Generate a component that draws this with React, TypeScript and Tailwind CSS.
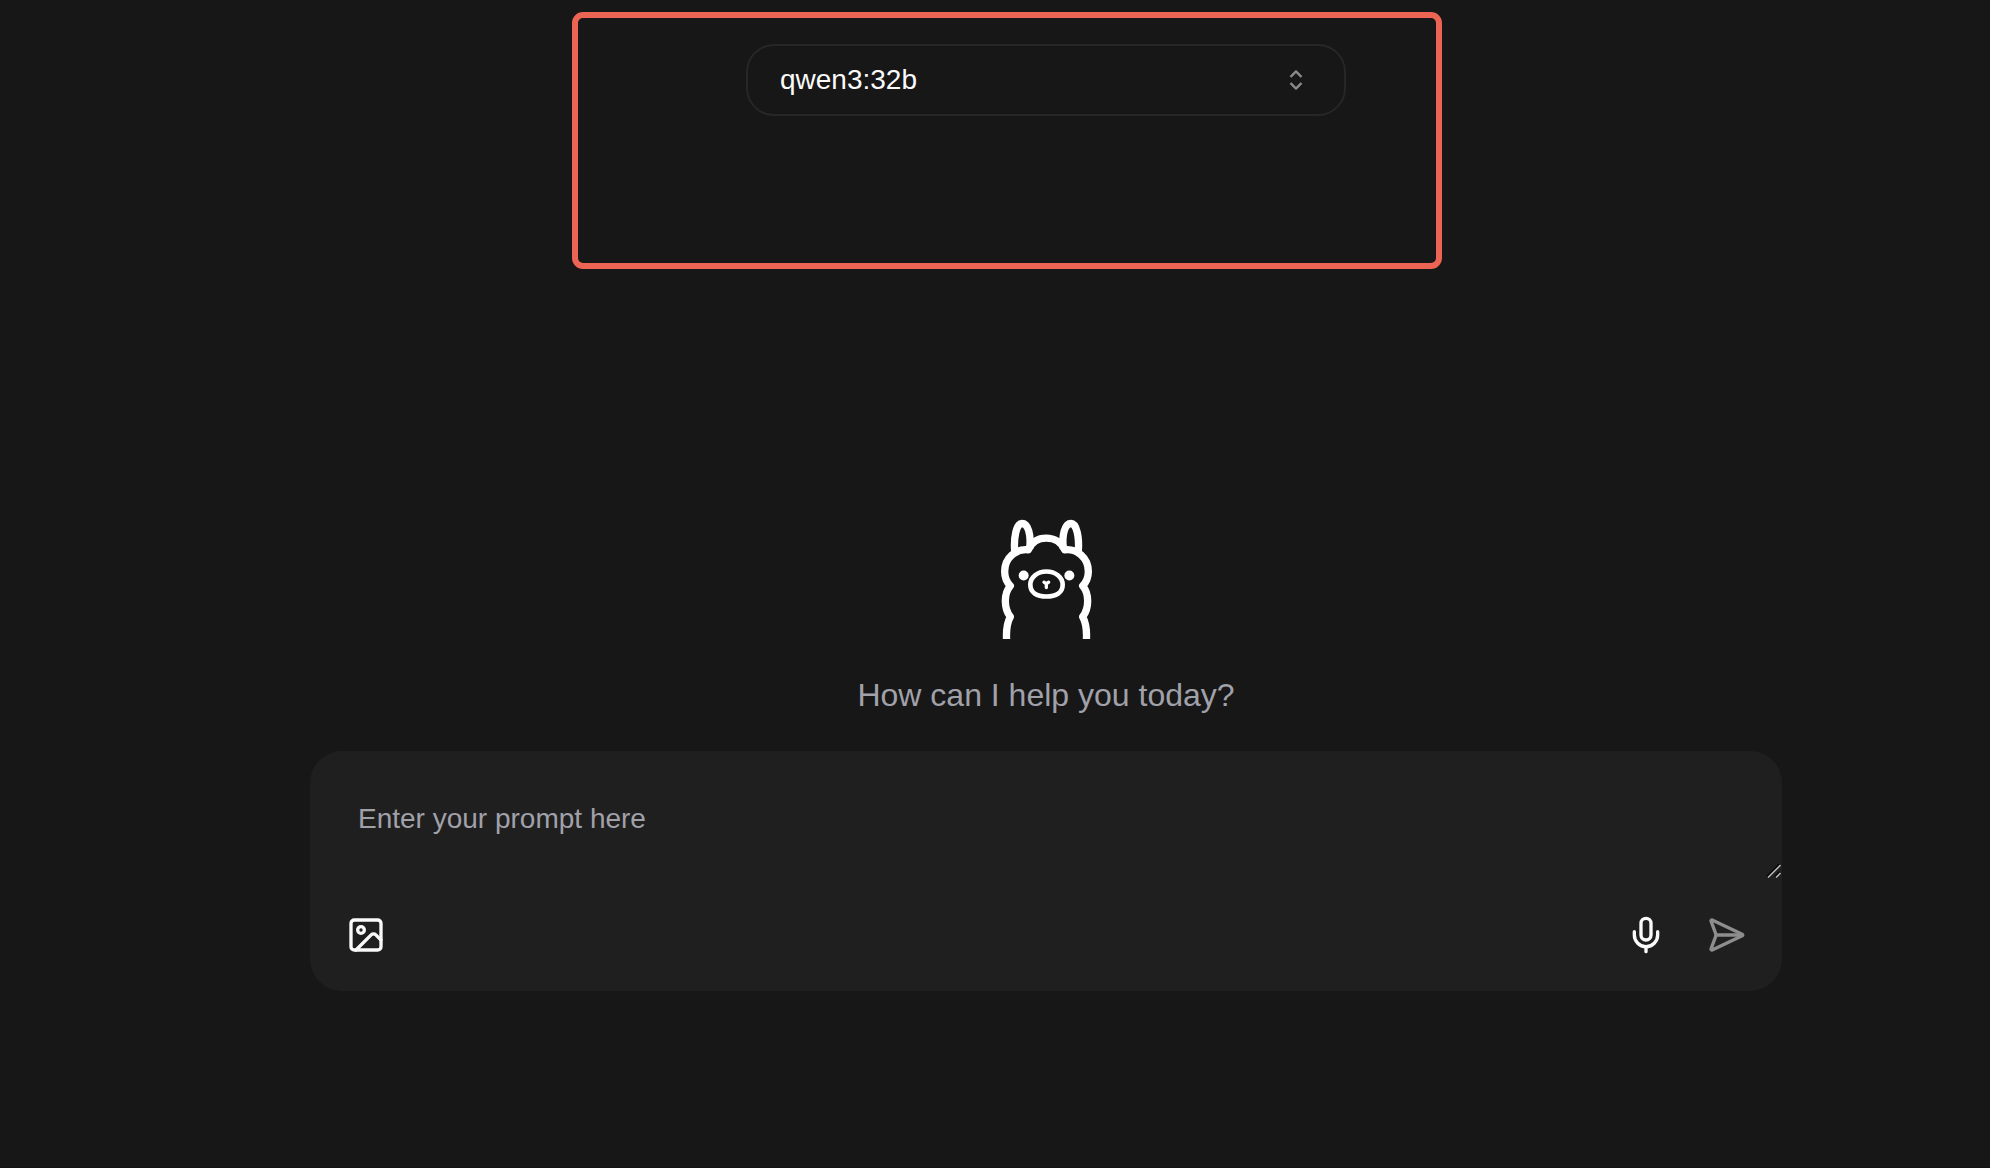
import { useState } from 'react';
import { Image as ImageIcon, Mic, SendHorizontal } from 'lucide-react';
import { RxCaretSort } from 'react-icons/rx';

const MODELS = ['qwen3:32b'];

function LlamaLogo() {
  return (
    <svg
      viewBox="63 58 273 359"
      className="h-[120px] w-[91px]"
      fill="none"
      stroke="currentColor"
      strokeWidth="22"
      strokeLinejoin="round"
      role="img"
      aria-label="Ollama"
    >
      {/* Ears */}
      <path d="M104 154C101 112 109 71 126 71C144 71 154 104 149 146" />
      <path d="M295 154C298 112 290 71 273 71C255 71 245 104 250 146" />
      {/* Head and body */}
      <path d="M80 424C78 395 80 371 91 351C71 325 71 281 91 258C80 247 74 232 74 215C74 174 108 146 145 150C155 127 175 115 199 115C223 115 244 127 254 150C291 146 325 174 325 215C325 232 319 247 308 258C328 281 328 325 308 351C319 371 321 395 319 424" />
      {/* Face */}
      <path
        strokeWidth="14"
        d="M199 215C173 215 151 232 151 255C151 278 170 290 199 290C229 290 248 278 248 255C248 232 226 215 199 215Z"
      />
      <path strokeWidth="10" strokeLinecap="round" d="M192 247L199 252L206 247M199 252V263" />
      <circle cx="131" cy="227" r="15" fill="currentColor" stroke="none" />
      <circle cx="268" cy="227" r="15" fill="currentColor" stroke="none" />
    </svg>
  );
}

function ModelSelect() {
  const [model, setModel] = useState(MODELS[0]);

  return (
    <div className="relative w-full max-w-[600px]">
      <select
        aria-label="Model"
        value={model}
        onChange={(e) => setModel(e.target.value)}
        className="block h-[72px] w-full appearance-none rounded-[28px] border-2 border-[#272727] bg-transparent px-8 text-[28px] text-neutral-50 outline-none cursor-pointer"
      >
        {MODELS.map((name) => (
          <option key={name} value={name}>
            {name}
          </option>
        ))}
      </select>
      <RxCaretSort
        stroke="currentColor"
        strokeWidth="0.3"
        className="pointer-events-none absolute top-5 right-[34px] h-8 w-8 text-neutral-50 opacity-50"
      />
    </div>
  );
}

function PromptBox() {
  const [prompt, setPrompt] = useState('');

  return (
    <form
      onSubmit={(e) => e.preventDefault()}
      className="w-full max-w-[1472px] rounded-[32px] bg-[#1f1f1f]"
    >
      <div className="relative">
        <textarea
          aria-label="Prompt"
          value={prompt}
          onChange={(e) => setPrompt(e.target.value)}
          placeholder="Enter your prompt here"
          className="block h-32 w-full resize-none bg-transparent px-12 pt-12 text-[28px] leading-10 text-neutral-50 placeholder:text-[#a1a1aa] outline-none"
        />
        {/* Resize grip */}
        <svg
          viewBox="0 0 16 16"
          className="pointer-events-none absolute right-0 bottom-0 h-4 w-4"
          fill="none"
          strokeWidth="1.6"
        >
          <path stroke="#000" d="M1 13.500L13.500 1M9 13.500L13.500 9" />
          <path stroke="#b5b5b5" d="M2 14.500L14.500 2M10 14.500L14.500 10" />
        </svg>
      </div>
      <div className="flex items-center justify-between p-9">
        <button type="button" aria-label="Attach image" className="text-neutral-50 cursor-pointer">
          <ImageIcon className="h-10 w-10" />
        </button>
        <div className="flex items-center gap-10">
          <button type="button" aria-label="Record voice" className="text-neutral-50 cursor-pointer">
            <Mic className="h-10 w-10" />
          </button>
          <button type="submit" aria-label="Send" disabled={!prompt} className="text-neutral-50 disabled:opacity-50">
            <SendHorizontal className="h-10 w-10" />
          </button>
        </div>
      </div>
    </form>
  );
}

export default function App() {
  return (
    <div className="relative flex min-h-screen flex-col border-b border-[#141014] bg-[#171717] pl-[102px] font-['Liberation_Sans',Arial,sans-serif]">
      <header className="flex justify-center pt-11">
        <ModelSelect />
      </header>

      {/* Highlight frame over the model picker */}
      <div className="pointer-events-none absolute top-3 left-1/2 ml-3 h-[257px] w-[870px] -translate-x-1/2 rounded-[11px] border-6 border-[#ec6453]" />

      <main className="flex flex-1 flex-col items-center justify-end pb-44 text-white">
        <LlamaLogo />
        <h1 className="mt-8 mb-8 text-[32px] leading-12 text-[#a1a1aa]">How can I help you today?</h1>
        <PromptBox />
      </main>
    </div>
  );
}
